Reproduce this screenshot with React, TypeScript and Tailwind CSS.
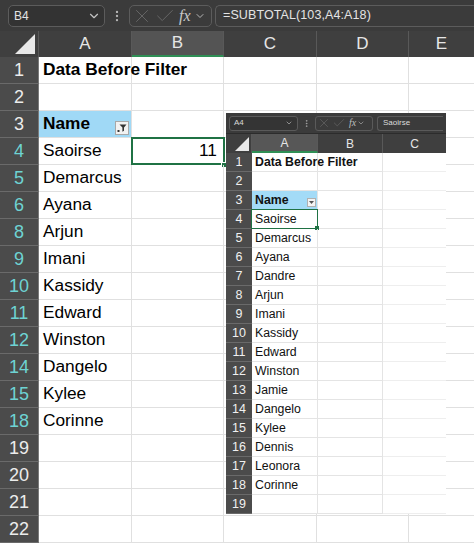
import React from 'react';
import { ChevronDown, EllipsisVertical, X, Check } from 'lucide-react';

const BIG_ROWS: { n: number; a?: string; filtered?: boolean }[] = [
  { n: 1, a: 'Data Before Filter' },
  { n: 2 },
  { n: 3, a: 'Name' },
  { n: 4, a: 'Saoirse', filtered: true },
  { n: 5, a: 'Demarcus', filtered: true },
  { n: 6, a: 'Ayana', filtered: true },
  { n: 8, a: 'Arjun', filtered: true },
  { n: 9, a: 'Imani', filtered: true },
  { n: 10, a: 'Kassidy', filtered: true },
  { n: 11, a: 'Edward', filtered: true },
  { n: 12, a: 'Winston', filtered: true },
  { n: 14, a: 'Dangelo', filtered: true },
  { n: 15, a: 'Kylee', filtered: true },
  { n: 18, a: 'Corinne', filtered: true },
  { n: 19 },
  { n: 20 },
  { n: 21 },
  { n: 22 },
];

const SMALL_NAMES = [
  'Data Before Filter', '', 'Name', 'Saoirse', 'Demarcus', 'Ayana', 'Dandre', 'Arjun', 'Imani',
  'Kassidy', 'Edward', 'Winston', 'Jamie', 'Dangelo', 'Kylee', 'Dennis', 'Leonora', 'Corinne', '',
];

const FilterApplied = () => (
  <svg width="10" height="10" viewBox="0 0 10 10">
    <path d="M2.5 1.5h7L7 4.6v3.2l-1.6.9V4.6z" fill="#333" />
    <rect x="0.5" y="7" width="2" height="2" fill="#333" />
  </svg>
);

const FormulaBar = ({ small }: { small?: boolean }) => {
  if (small) {
    return (
      <div className="h-[21px] bg-[#3b3b3b] flex items-center gap-[4px] px-[3px] border-b border-[#2c2c2c]">
        <div className="w-[69px] h-[15px] rounded-[3px] border border-[#5a5a5a] bg-[#343434] flex items-center justify-between px-[4px]">
          <span className="text-[8px] text-[#d8d8d8]">A4</span>
          <ChevronDown size={8} className="text-[#bbbbbb]" />
        </div>
        <EllipsisVertical size={9} className="text-[#aaaaaa]" />
        <div className="w-[58px] h-[15px] rounded-[3px] border border-[#5a5a5a] flex items-center gap-[1px] px-[1px]">
          <X size={14} strokeWidth={1} className="text-[#6e6e6e]" />
          <Check size={14} strokeWidth={1} className="text-[#6e6e6e]" />
          <span className="font-['Liberation_Serif',serif] italic text-[10px] text-[#bdbdbd] leading-none ml-[2px]">fx</span>
          <ChevronDown size={8} className="text-[#aaaaaa]" />
        </div>
        <div className="flex-1 h-[15px] rounded-l-[3px] border border-r-0 border-[#5a5a5a] flex items-center px-[5px]">
          <span className="text-[8px] text-[#dcdcdc]">Saoirse</span>
        </div>
      </div>
    );
  }
  return (
    <div className="h-[31px] bg-[#3b3b3b] flex items-center gap-[7px] pl-[8px]">
      <div className="w-[97px] h-[22px] rounded-[5px] border border-[#5c5c5c] bg-[#333333] flex items-center justify-between pl-[5px] pr-[3px]">
        <span className="text-[12px] text-[#e2e2e2]">B4</span>
        <ChevronDown size={14} className="text-[#c4c4c4]" />
      </div>
      <EllipsisVertical size={14} className="text-[#b5b5b5] -mx-[2px]" />
      <div className="w-[83px] h-[22px] rounded-[5px] border border-[#5c5c5c] flex items-center gap-[1px] pl-[1px]">
        <X size={22} strokeWidth={0.9} className="text-[#6f6f6f]" />
        <Check size={22} strokeWidth={0.9} className="text-[#6f6f6f]" />
        <span className="font-['Liberation_Serif',serif] italic text-[16px] text-[#c8c8c8] leading-none ml-[2px]">fx</span>
        <ChevronDown size={12} className="text-[#b5b5b5] ml-[2px]" />
      </div>
      <div className="flex-1 h-[22px] rounded-l-[5px] border border-r-0 border-[#5c5c5c] flex items-center pl-[7px] -ml-[4px]">
        <span className="text-[12.5px] text-[#e4e4e4] tracking-[0.1px]">=SUBTOTAL(103,A4:A18)</span>
      </div>
    </div>
  );
};

const Corner = ({ size }: { size: number }) => (
  <svg width={size} height={size} viewBox="0 0 10 10">
    <path d="M10 0V10H0z" fill="#e8e8e8" />
  </svg>
);

export default function App() {
  return (
    <div className="relative w-[474px] h-[543px] overflow-hidden bg-white font-['Liberation_Sans',Arial,sans-serif]">
      <FormulaBar />

      {/* column headers */}
      <div className="flex h-[26px] bg-[#3f3f3f] text-[17px] text-[#e6e6e6]">
        <div className="w-[39px] shrink-0 flex items-end justify-end pr-[3px] pb-[3px] border-r border-[#595959]">
          <Corner size={20} />
        </div>
        <div className="w-[93px] shrink-0 flex items-center justify-center border-r border-[#595959]">A</div>
        <div className="w-[92px] shrink-0 flex items-center justify-center border-r border-[#595959] bg-[#545454] border-b-2 border-b-[#2f8f55]">B</div>
        <div className="w-[93px] shrink-0 flex items-center justify-center border-r border-[#595959]">C</div>
        <div className="w-[92px] shrink-0 flex items-center justify-center border-r border-[#595959]">D</div>
        <div className="flex-1 flex items-center justify-center">E</div>
      </div>

      {BIG_ROWS.map((r) => (
        <div key={r.n} className="flex h-[27px]">
          <div
            className={`w-[39px] shrink-0 bg-[#4b4b4b] border-b border-[#6a6a6a] border-r border-r-[#7a7a7a] flex items-center justify-center text-[18px] ${
              r.filtered ? 'text-[#6ed3d3]' : 'text-[#ececec]'
            }`}
          >
            {r.n}
          </div>
          <div
            className={`w-[93px] shrink-0 border-b border-r border-[#e0e0e0] flex items-center pl-[4px] text-[17.3px] text-black relative ${
              r.n === 1 || r.n === 3 ? 'font-bold' : ''
            } ${r.n === 3 ? 'bg-[#a0d9f6]' : ''}`}
          >
            <span className="whitespace-nowrap">{r.a}</span>
            {r.n === 3 && (
              <div className="absolute right-[2px] top-[10px] w-[14px] h-[14px] bg-[#f2f2f2] border border-[#a8a8a8] flex items-center justify-center">
                <FilterApplied />
              </div>
            )}
          </div>
          <div className="w-[92px] shrink-0 border-b border-r border-[#e0e0e0] relative flex items-center justify-end pr-[6px] text-[17.3px] text-black">
            {r.n === 4 && (
              <>
                <span>11</span>
                <div className="absolute -left-[1px] -top-[1px] w-[94px] h-[28px] border-2 border-[#1f7244]" />
                <div className="absolute -right-[4px] -bottom-[4px] w-[6px] h-[6px] bg-[#1f7244] border border-white" />
              </>
            )}
          </div>
          <div className="w-[93px] shrink-0 border-b border-r border-[#e0e0e0]" />
          <div className="w-[92px] shrink-0 border-b border-r border-[#e0e0e0]" />
          <div className="flex-1 border-b border-[#e0e0e0]" />
        </div>
      ))}

      {/* pasted screenshot of the unfiltered sheet */}
      <div className="absolute left-[226px] top-[113px] w-[220px] bg-white">
        <FormulaBar small />
        <div className="flex h-[19px] bg-[#3f3f3f] text-[12px] text-[#e6e6e6]">
          <div className="w-[26px] shrink-0 flex items-end justify-end pr-[2px] pb-[2px] border-r border-[#595959]">
            <Corner size={14} />
          </div>
          <div className="w-[66px] shrink-0 flex items-center justify-center bg-[#575757] border-r border-[#595959] border-b-2 border-b-[#2f8f55]">A</div>
          <div className="w-[65px] shrink-0 flex items-center justify-center border-r border-[#595959]">B</div>
          <div className="flex-1 flex items-center justify-center">C</div>
        </div>
        {SMALL_NAMES.map((name, i) => {
          const n = i + 1;
          return (
            <div key={n} className="flex h-[19px]">
              <div className="w-[26px] shrink-0 bg-[#4b4b4b] border-b border-[#6a6a6a] flex items-center justify-center text-[12.5px] text-[#f0f0f0]">
                {n}
              </div>
              <div
                className={`w-[66px] shrink-0 border-b border-r border-[#e4e4e4] flex items-center pl-[3px] text-[12.3px] text-[#111] relative ${
                  n === 1 || n === 3 ? 'font-bold' : ''
                } ${n === 3 ? 'bg-[#a3dbf7]' : ''}`}
              >
                <span className="whitespace-nowrap">{name}</span>
                {n === 3 && (
                  <div className="absolute right-[1px] top-[7px] w-[9px] h-[9px] bg-[#f4f4f4] border border-[#b0b0b0] flex items-center justify-center">
                    <svg width="5" height="3" viewBox="0 0 5 3">
                      <path d="M0 0h5L2.5 3z" fill="#555" />
                    </svg>
                  </div>
                )}
                {n === 4 && (
                  <>
                    <div className="absolute -left-[1px] -top-[1px] w-[67px] h-[20px] border-[1.5px] border-[#1f7244]" />
                    <div className="absolute -right-[2px] -bottom-[2px] w-[4px] h-[4px] bg-[#1f7244]" />
                  </>
                )}
              </div>
              <div className="w-[65px] shrink-0 border-b border-r border-[#e4e4e4]" />
              <div className="flex-1 border-b border-[#eeeeee]" />
            </div>
          );
        })}
      </div>
    </div>
  );
}
